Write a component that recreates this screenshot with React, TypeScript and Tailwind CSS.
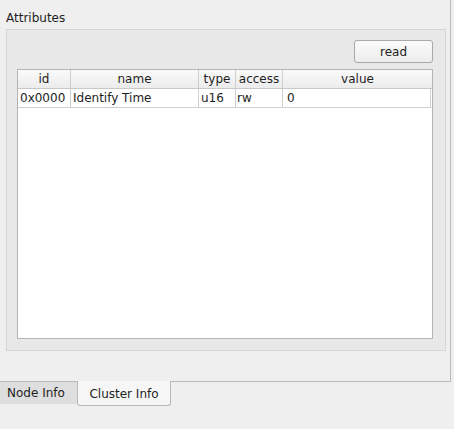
const font = { fontFamily: '"DejaVu Sans", Verdana, sans-serif' };

const columns = [
  { key: 'id', label: 'id' },
  { key: 'name', label: 'name' },
  { key: 'type', label: 'type' },
  { key: 'access', label: 'access' },
  { key: 'value', label: 'value' },
];

const rows = [{ id: '0x0000', name: 'Identify Time', type: 'u16', access: 'rw', value: '0' }];

const AttributesTable = () => {
  return (
    <div className="w-[416px] h-[270px] border border-[#b4b4b4] bg-white">
      <div className="grid grid-cols-[53px_128px_37px_47px_1fr] h-[19px] border-b border-[#c8c8c8] bg-gradient-to-b from-[#fafafa] to-[#ececec]">
        {columns.map((c, i) => (
          <div
            key={c.key}
            className={`flex items-center justify-center leading-none text-[12px] text-[#1e1e1e] ${i < columns.length - 1 ? 'border-r border-[#cfcfcf]' : ''}`}
          >
            {c.label}
          </div>
        ))}
      </div>
      {rows.map((r) => (
        <div key={r.id} className="grid grid-cols-[53px_128px_37px_47px_1fr] h-[19px] border-b border-[#cfcfcf] mr-[1px]">
          <div className="flex items-center pl-[2px] border-r border-[#cfcfcf]">{r.id}</div>
          <div className="flex items-center pl-[2px] border-r border-[#cfcfcf]">{r.name}</div>
          <div className="flex items-center pl-[2px] border-r border-[#cfcfcf]">{r.type}</div>
          <div className="flex items-center pl-[1px] border-r border-[#cfcfcf]">{r.access}</div>
          <div className="flex items-center pl-[4px] border-r border-[#cfcfcf]">{r.value}</div>
        </div>
      ))}
    </div>
  );
};

export default function App() {
  return (
    <div className="w-[454px] h-[429px] bg-[#efefef] text-[12px] text-[#1e1e1e]" style={font}>
      <div className="w-[451px] h-[382px] border-r border-b border-[#b9b9b9] pl-[6px] pt-[10px]">
        <div className="h-[16px] leading-[16px]">Attributes</div>
        <div className="mt-[3px] w-[440px] h-[322px] border border-[#d6d6d6] bg-[#e8e8e8] pt-[10px] pl-[10px]">
          <div className="flex justify-end w-[416px]">
            <button className="w-[79px] h-[23px] rounded-[3px] border border-[#a9a9a9] bg-gradient-to-b from-[#fbfbfb] to-[#ececec] text-[12px] leading-none text-[#1e1e1e]">
              read
            </button>
          </div>
          <div className="mt-[6px]">
            <AttributesTable />
          </div>
        </div>
      </div>
      <div className="flex">
        <div className="w-[77px] h-[22px] bg-[#dedede] flex items-center pl-[7px]">Node Info</div>
        <div className="w-[94px] h-[25px] -mt-[1px] bg-[#f6f6f6] border-l border-r border-b border-[#b9b9b9] rounded-b-[3px] flex items-center justify-center pt-[2px]">
          Cluster Info
        </div>
      </div>
    </div>
  );
}
